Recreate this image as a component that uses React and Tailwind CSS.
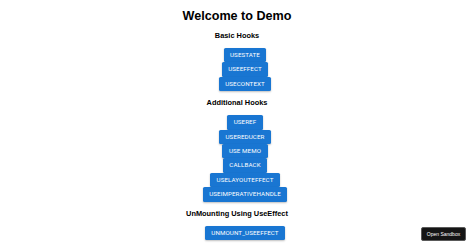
import React from "react";

function Btn({ children }) {
  return (
    <button className="h-[14.4px] px-[6.5px] flex items-center justify-center rounded-[1.6px] bg-[#1976d2] text-white text-[6.2px] font-normal tracking-[0.1px] uppercase shadow-[0_1px_2px_rgba(0,0,0,0.25)] font-['Roboto',sans-serif] leading-none whitespace-nowrap">
      {children}
    </button>
  );
}

function Group({ items }) {
  return (
    <div className="mt-[8px] pl-[16px] flex flex-col items-center">
      {items.map((t) => (
        <Btn key={t}>{t}</Btn>
      ))}
    </div>
  );
}

export default function App() {
  return (
    <div className="relative w-[474px] h-[248px] bg-white overflow-hidden font-['Liberation_Sans',Arial,sans-serif] text-black">
      <div className="flex flex-col items-center">
        <h1 className="mt-[9px] text-[12.6px] leading-[14px] font-bold">Welcome to Demo</h1>
        <h3 className="mt-[9px] text-[7.4px] leading-[8px] font-bold">Basic Hooks</h3>
        <Group items={["useState", "useEffect", "useContext"]} />
        <h3 className="mt-[8px] text-[7.4px] leading-[8px] font-bold">Additional Hooks</h3>
        <Group
          items={[
            "useRef",
            "useReducer",
            "use Memo",
            "Callback",
            "useLayoutEffect",
            "useImperativeHandle",
          ]}
        />
        <h3 className="mt-[8px] text-[7.4px] leading-[8px] font-bold">UnMounting Using UseEffect</h3>
        <Group items={["unmount_useEffect"]} />
      </div>
      <button className="absolute right-[8px] bottom-[7px] w-[45px] h-[14px] flex items-center justify-center rounded-[2px] bg-[#151515] border border-[#5a5a5a] text-white text-[5px] leading-none font-['Liberation_Sans',Arial,sans-serif]">
        Open Sandbox
      </button>
    </div>
  );
}
